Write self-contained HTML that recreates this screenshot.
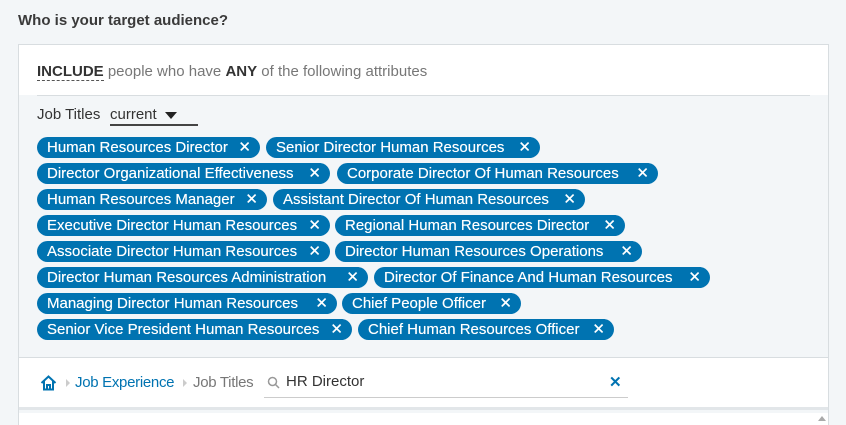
<!DOCTYPE html>
<html><head><style>
*{margin:0;padding:0;box-sizing:border-box}
html,body{width:846px;height:425px;overflow:hidden}
body{background:#f3f6f8;font-family:"Liberation Sans",sans-serif;position:relative;color:#333}
.h{position:absolute;left:18px;top:12px;font-size:15px;font-weight:bold;color:#3a3a3a}
.card{position:absolute;left:18px;top:44px;width:811px;height:400px;border:1px solid #d8dde0;background:#f3f6f8}
.top{position:absolute;left:0;top:0;width:809px;height:50px;background:#fff}
.inc{position:absolute;left:18px;top:18px;font-size:15px;color:#777}
.inc b{color:#333;font-weight:bold}
.inc .u{border-bottom:1px dashed #555}
.rule{position:absolute;left:18px;top:50px;width:773px;height:1px;background:#d8dde0}
.jt{position:absolute;left:18px;top:61px;font-size:15px;color:#333}
.cur{position:absolute;left:91px;top:61px;width:88px;font-size:15px;border-bottom:2px solid #444;padding-bottom:1px}
.tri{position:absolute;left:165px;top:112px;width:0;height:0;border-left:6px solid transparent;border-right:6px solid transparent;border-top:7px solid #222}
.p{position:absolute;height:21px;background:#0073b1;border-radius:11px;color:#fff;font-size:15px;line-height:21px;padding-left:10px;white-space:nowrap;overflow:hidden;text-shadow:0 0 .4px #fff}
.p i{position:absolute;right:9px;top:0;font-style:normal;font-size:15px;background:#0073b1;padding-left:3px}
.bot{position:absolute;left:19px;top:357px;width:809px;height:53px;background:#fff;border-top:1px solid #d8dde0;border-bottom:3px solid #e2e6e9}
.low{position:absolute;left:19px;top:413px;width:809px;height:20px;background:#fff}
</style></head><body>
<div class="h">Who is your target audience?</div>
<div class="card"><div class="top"></div><div class="inc"><b class="u">INCLUDE</b> people who have <b>ANY</b> of the following attributes</div><div class="rule"></div>
<div class="jt">Job Titles</div><div class="cur">current</div></div>
<div class="tri"></div>
<div class="p" style="left:37px;top:137px;width:223px">Human Resources Director<i>✕</i></div>
<div class="p" style="left:266px;top:137px;width:274px">Senior Director Human Resources<i>✕</i></div>
<div class="p" style="left:37px;top:163px;width:293px">Director Organizational Effectiveness<i>✕</i></div>
<div class="p" style="left:337px;top:163px;width:321px">Corporate Director Of Human Resources<i>✕</i></div>
<div class="p" style="left:37px;top:189px;width:230px">Human Resources Manager<i>✕</i></div>
<div class="p" style="left:273px;top:189px;width:312px">Assistant Director Of Human Resources<i>✕</i></div>
<div class="p" style="left:37px;top:215px;width:293px">Executive Director Human Resources<i>✕</i></div>
<div class="p" style="left:335px;top:215px;width:290px">Regional Human Resources Director<i>✕</i></div>
<div class="p" style="left:37px;top:241px;width:293px">Associate Director Human Resources<i>✕</i></div>
<div class="p" style="left:335px;top:241px;width:307px">Director Human Resources Operations<i>✕</i></div>
<div class="p" style="left:37px;top:267px;width:331px">Director Human Resources Administration<i>✕</i></div>
<div class="p" style="left:374px;top:267px;width:336px">Director Of Finance And Human Resources<i>✕</i></div>
<div class="p" style="left:37px;top:293px;width:300px">Managing Director Human Resources<i>✕</i></div>
<div class="p" style="left:342px;top:293px;width:179px">Chief People Officer<i>✕</i></div>
<div class="p" style="left:37px;top:319px;width:315px">Senior Vice President Human Resources<i>✕</i></div>
<div class="p" style="left:358px;top:319px;width:256px">Chief Human Resources Officer<i>✕</i></div>
<div class="bot"></div><div class="low"></div>
<svg style="position:absolute;left:40px;top:375px" width="17" height="16" viewBox="0 0 17 16"><path d="M1.5 8 L8.5 1.5 L15.5 8 M4 6 V14.5 H13 V6 M7 14.5 V10 H10 V14.5" fill="none" stroke="#0073b1" stroke-width="2"/></svg>
<div style="position:absolute;left:66px;top:379px;width:0;height:0;border-top:4px solid transparent;border-bottom:4px solid transparent;border-left:4px solid #ccc"></div>
<div style="position:absolute;left:75px;top:374px;font-size:15px;color:#0073b1;letter-spacing:-0.3px">Job Experience</div>
<div style="position:absolute;left:183px;top:379px;width:0;height:0;border-top:4px solid transparent;border-bottom:4px solid transparent;border-left:4px solid #ccc"></div>
<div style="position:absolute;left:193px;top:374px;font-size:15px;color:#777;letter-spacing:-0.3px">Job Titles</div>
<svg style="position:absolute;left:267px;top:376px" width="13" height="14"><circle cx="5.5" cy="5.5" r="4" fill="none" stroke="#999" stroke-width="1.5"/><path d="M8.5 8.5 L12 12" stroke="#999" stroke-width="1.5"/></svg>
<div style="position:absolute;left:286px;top:373px;font-size:15px;color:#333">HR Director</div>
<div style="position:absolute;left:264px;top:397px;width:364px;height:1px;background:#ccc"></div>
<div style="position:absolute;left:609px;top:373px;font-size:15px;font-weight:bold;color:#0073b1">✕</div>
<div style="position:absolute;left:818px;top:416px;width:0;height:0;border-left:4px solid transparent;border-right:4px solid transparent;border-bottom:5px solid #aaa"></div>
</body></html>
